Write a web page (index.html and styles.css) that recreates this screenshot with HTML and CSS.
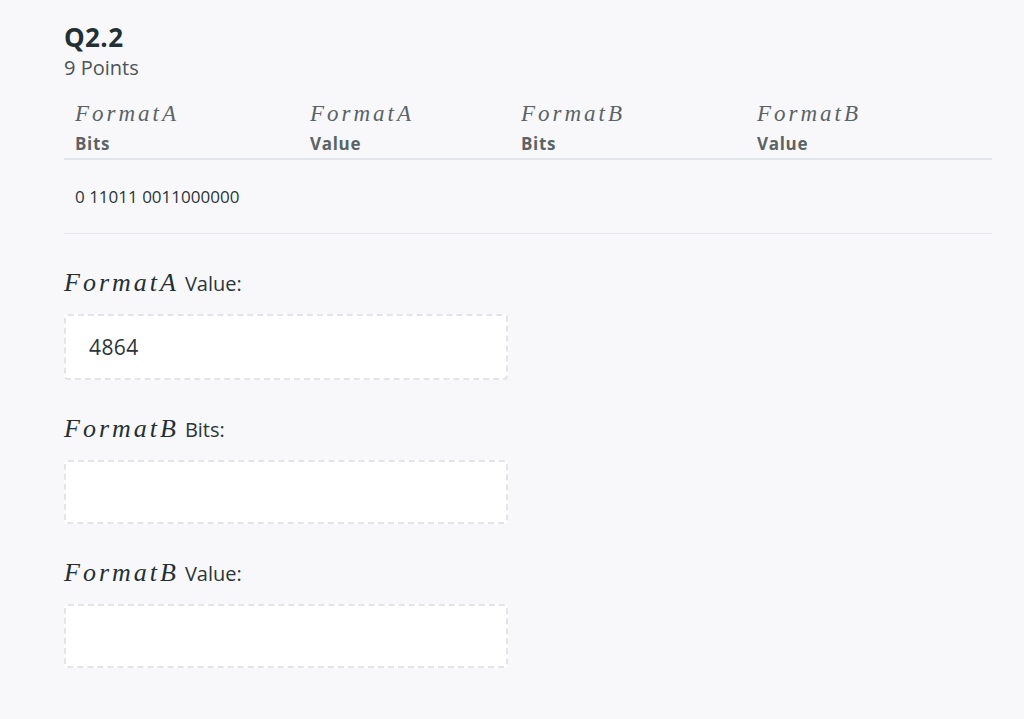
FILE: index.html
```html
<!DOCTYPE html>
<html>
<head>
<meta charset="utf-8">
<link rel="stylesheet" href="styles.css">
</head>
<body>
<main class="question">
  <header class="q-head">
    <h1 class="q-title">Q2.2</h1>
    <div class="q-points">9 Points</div>
  </header>
  <table class="q-table">
    <thead>
      <tr>
        <th><span class="math">FormatA</span><span class="sub">Bits</span></th>
        <th><span class="math">FormatA</span><span class="sub">Value</span></th>
        <th><span class="math">FormatB</span><span class="sub">Bits</span></th>
        <th><span class="math">FormatB</span><span class="sub">Value</span></th>
      </tr>
    </thead>
    <tbody>
      <tr>
        <td>0 11011 0011000000</td>
        <td></td>
        <td></td>
        <td></td>
      </tr>
    </tbody>
  </table>
  <section class="field">
    <label class="field-label"><span class="math big">FormatA</span> Value:</label>
    <div class="answer filled">4864</div>
  </section>
  <section class="field">
    <label class="field-label"><span class="math big">FormatB</span> Bits:</label>
    <div class="answer"></div>
  </section>
  <section class="field">
    <label class="field-label"><span class="math big">FormatB</span> Value:</label>
    <div class="answer"></div>
  </section>
</main>
</body>
</html>
```
FILE: styles.css
```css
html, body {
  margin: 0;
  padding: 0;
  background: #f8f8fa;
}
body {
  font-family: "Open Sans", "Lato", sans-serif;
  color: #2b3537;
}
.question {
  padding: 21px 32px 0 64px;
}
.q-title {
  margin: 0;
  font-size: 26px;
  font-weight: 700;
  line-height: 32px;
  letter-spacing: 0.4px;
  color: #223034;
}
.q-points {
  font-size: 20px;
  line-height: 26px;
  color: #4a5457;
  margin-top: 2px;
}
.q-table {
  width: 928px;
  border-collapse: collapse;
  margin-top: 20px;
}
.q-table th {
  text-align: left;
  padding: 0 11px 3px;
  border-bottom: 2px solid #e3e6ea;
  vertical-align: top;
}
.q-table th:nth-child(1) { width: 213px; }
.q-table th:nth-child(2) { width: 189px; }
.q-table th:nth-child(3) { width: 214px; }
.math {
  font-family: "Liberation Serif", serif;
  font-style: italic;
  font-weight: 400;
  font-size: 23px;
  letter-spacing: 3px;
  color: #5a6366;
  display: block;
  line-height: 26px;
}
.sub {
  display: block;
  font-size: 17px;
  font-weight: 700;
  letter-spacing: 0.7px;
  color: #5a6366;
  line-height: 22px;
  margin-top: 6px;
}
.q-table td {
  padding: 26px 11px 25px;
  font-size: 17px;
  line-height: 22px;
  border-bottom: 1px solid #e3e6ea;
  color: #2b3537;
}
.field {
  margin-top: 35px;
}
.field-label {
  display: flex;
  align-items: baseline;
  gap: 6px;
  font-size: 20px;
  line-height: 30px;
  color: #2b3537;
}
.math.big {
  display: inline;
  font-size: 26px;
  color: #223034;
  letter-spacing: 3px;
}
.answer {
  margin-top: 15px;
  box-sizing: border-box;
  width: 444px;
  height: 64px;
  background: #fff;
  border: 2px dashed #e2e4e6;
  border-radius: 4px;
  padding: 0 23px;
  display: flex;
  align-items: center;
  font-size: 21px;
  letter-spacing: 0.4px;
  color: #2b3537;
}
.answer.filled {
  height: 66px;
}
```
